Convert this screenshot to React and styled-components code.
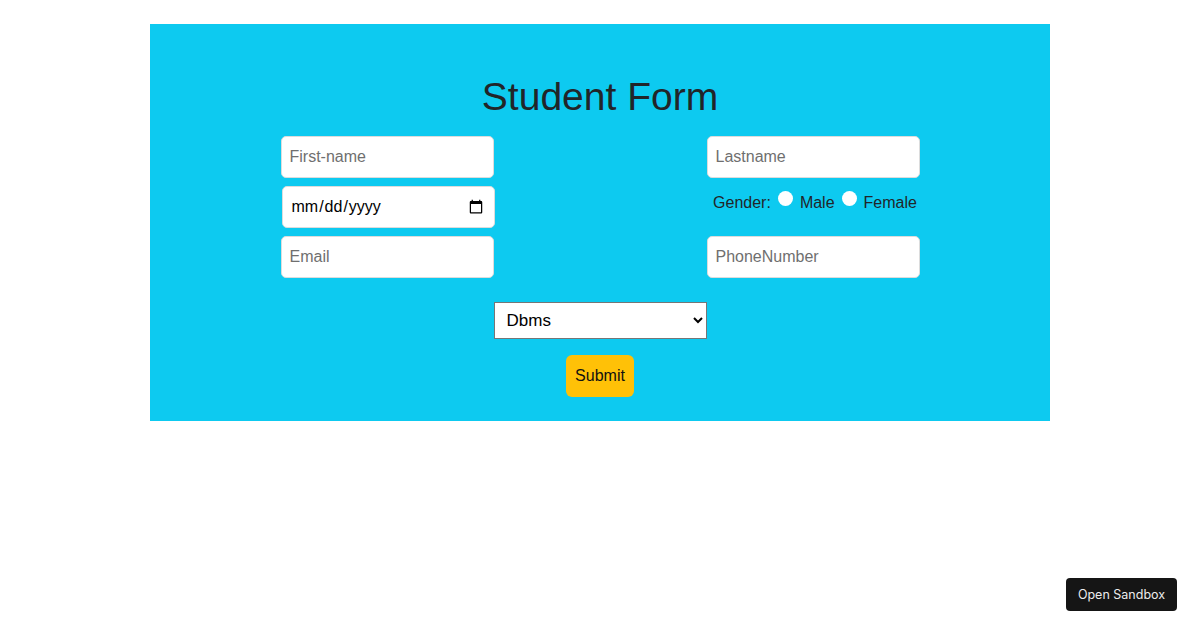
import React from "react";
import styled, { createGlobalStyle } from "styled-components";

const Global = createGlobalStyle`
  html, body { margin: 0; padding: 0; background: #fff; }
  body { font-family: "Liberation Sans", Arial, sans-serif; color: #212529; }
`;

const Page = styled.div`
  padding-top: 24px;
`;

const Card = styled.form`
  width: 900px;
  margin: 0 auto;
  background: #0dcaf0;
  padding: 50px 0 24px;
  display: flex;
  flex-direction: column;
  align-items: center;
  box-sizing: border-box;
`;

const Title = styled.h1`
  margin: 0 0 16px;
  font-size: 39px;
  font-weight: 400;
  line-height: 46px;
  color: #212529;
`;

const Grid = styled.div`
  display: grid;
  grid-template-columns: repeat(3, 213px);
  grid-auto-rows: 42px;
  row-gap: 8px;
`;

const Field = styled.input`
  grid-column: ${(p) => p.$col};
  box-sizing: border-box;
  width: 213px;
  height: 42px;
  margin-left: ${(p) => (p.$nudge ? "1px" : "0")};
  padding: 0 8px;
  border: 1px solid #dcdcdc;
  border-radius: 5px;
  background: #fff;
  font-family: "Liberation Sans", Arial, sans-serif;
  font-size: 16px;
  color: #000;
  outline: none;
  &::placeholder { color: #6f6f6f; }
`;

const Gender = styled.div`
  grid-column: 3;
  display: flex;
  align-items: flex-start;
  justify-content: center;
  padding: 7px 0 0 4px;
  font-size: 16px;
  line-height: 20px;
  color: #212529;
  white-space: nowrap;
`;

const Radio = styled.input.attrs({ type: "radio" })`
  appearance: none;
  -webkit-appearance: none;
  width: 15px;
  height: 15px;
  border-radius: 50%;
  background: #fff;
  border: none;
  margin: -2px 7px 0 7px;
  flex: none;
`;

const Select = styled.select`
  margin-top: 24px;
  width: 213px;
  height: 37px;
  box-sizing: border-box;
  padding: 0 8px;
  border: 1px solid #767676;
  border-radius: 0;
  background: #fff;
  font-family: "Liberation Sans", Arial, sans-serif;
  font-size: 17px;
  color: #000;
`;

const Submit = styled.button`
  margin-top: 16px;
  height: 42px;
  padding: 0 9px;
  border: none;
  border-radius: 6px;
  background: #ffc107;
  font-family: "Liberation Sans", Arial, sans-serif;
  font-size: 16px;
  color: #111;
  cursor: pointer;
`;

const SandboxBtn = styled.button`
  position: fixed;
  right: 23px;
  bottom: 19px;
  width: 111px;
  height: 33px;
  border: none;
  border-radius: 4px;
  background: #151515;
  color: #ececec;
  font-family: Inter, "Liberation Sans", sans-serif;
  font-size: 12.5px;
  font-weight: 400;
`;

export default function App() {
  return (
    <>
      <Global />
      <Page>
        <Card onSubmit={(e) => e.preventDefault()}>
          <Title>Student Form</Title>
          <Grid>
            <Field $col={1} placeholder="First-name" />
            <Field $col={3} placeholder="Lastname" />
            <Field $col={1} $nudge type="date" />
            <Gender>
              Gender:
              <Radio name="g" />
              Male
              <Radio name="g" />
              Female
            </Gender>
            <Field $col={1} placeholder="Email" />
            <Field $col={3} placeholder="PhoneNumber" />
          </Grid>
          <Select defaultValue="Dbms">
            <option>Dbms</option>
            <option>Java</option>
            <option>Python</option>
          </Select>
          <Submit type="submit">Submit</Submit>
        </Card>
      </Page>
      <SandboxBtn>Open Sandbox</SandboxBtn>
    </>
  );
}
